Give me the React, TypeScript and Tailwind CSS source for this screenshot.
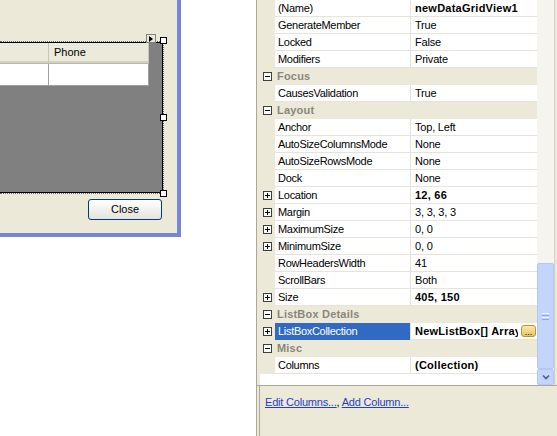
import React from 'react'

type Row =
  | { cat: string }
  | { n: string; v: string; b?: boolean; plus?: boolean; sel?: boolean; btn?: boolean }

const ROWS: Row[] = [
  { n: '(Name)', v: 'newDataGridView1', b: true },
  { n: 'GenerateMember', v: 'True' },
  { n: 'Locked', v: 'False' },
  { n: 'Modifiers', v: 'Private' },
  { cat: 'Focus' },
  { n: 'CausesValidation', v: 'True' },
  { cat: 'Layout' },
  { n: 'Anchor', v: 'Top, Left' },
  { n: 'AutoSizeColumnsMode', v: 'None' },
  { n: 'AutoSizeRowsMode', v: 'None' },
  { n: 'Dock', v: 'None' },
  { n: 'Location', v: '12, 66', b: true, plus: true },
  { n: 'Margin', v: '3, 3, 3, 3', plus: true },
  { n: 'MaximumSize', v: '0, 0', plus: true },
  { n: 'MinimumSize', v: '0, 0', plus: true },
  { n: 'RowHeadersWidth', v: '41' },
  { n: 'ScrollBars', v: 'Both' },
  { n: 'Size', v: '405, 150', b: true, plus: true },
  { cat: 'ListBox Details' },
  { n: 'ListBoxCollection', v: 'NewListBox[] Array', b: true, plus: true, sel: true, btn: true },
  { cat: 'Misc' },
  { n: 'Columns', v: '(Collection)', b: true },
]

function ExpandBox({ open }: { open: boolean }) {
  return (
    <svg width="9" height="9" viewBox="0 0 9 9" className="block">
      <rect x="0.5" y="0.5" width="8" height="8" fill="#fff" stroke="#3f3f3f" />
      <line x1="2" y1="4.5" x2="7" y2="4.5" stroke="#000" />
      {!open && <line x1="4.5" y1="2" x2="4.5" y2="7" stroke="#000" />}
    </svg>
  )
}

function PropRow({ row }: { row: Row }) {
  if ('cat' in row) {
    return (
      <div className="flex h-[17px] items-center bg-[#ECE9D8]">
        <div className="flex w-[18px] shrink-0 justify-center pl-[2px]">
          <ExpandBox open />
        </div>
        <span className="pl-[2px] font-bold tracking-[0.2px] text-[#8a877a]">{row.cat}</span>
      </div>
    )
  }
  return (
    <div className="flex h-[17px]">
      <div className="flex w-[18px] shrink-0 items-center justify-center bg-[#ECE9D8] pl-[2px]">
        {row.plus && <ExpandBox open={false} />}
      </div>
      <div
        className={
          row.sel
            ? 'flex w-[136px] shrink-0 items-center border-r border-[#E6E4DA] bg-[#316AC5] pl-[3px] text-white'
            : 'flex w-[136px] shrink-0 items-center border-r border-b border-[#E6E4DA] bg-white pl-[3px] text-black'
        }
      >
        <span className="whitespace-nowrap tracking-[-0.3px]">{row.n}</span>
      </div>
      <div className="flex min-w-0 flex-1 items-center border-b border-[#E6E4DA] bg-white pl-[4px] pr-[1px]">
        <span
          className={
            'min-w-0 flex-1 overflow-hidden whitespace-nowrap text-black ' +
            (row.b ? 'font-bold tracking-[0.25px]' : 'tracking-[-0.2px]')
          }
        >
          {row.v}
        </span>
        {row.btn && (
          <div className="ml-[3px] flex h-[12px] w-[15px] shrink-0 items-end justify-center rounded-[3px] border border-[#b8953c] bg-linear-to-b from-[#fbe7a6] to-[#e9c35f] text-[9px] leading-[8px] text-black">
            ...
          </div>
        )}
      </div>
    </div>
  )
}

function ScrollBar() {
  return (
    <div className="flex w-[17px] shrink-0 flex-col bg-[#F5F4EF]">
      <div className="h-[263px]" />
      <div className="flex h-[106px] items-center justify-center rounded-[2px] border border-[#b4c8f6] bg-[#c3d5fd]">
        <div className="flex flex-col gap-[1px]">
          <div className="h-px w-[7px] bg-[#eef4fe]" />
          <div className="h-px w-[7px] bg-[#8ca6e4]" />
          <div className="h-px w-[7px] bg-[#eef4fe]" />
          <div className="h-px w-[7px] bg-[#8ca6e4]" />
        </div>
      </div>
      <div className="flex h-[16px] items-center justify-center rounded-[2px] border border-[#b4c8f6] bg-[#c3d5fd]">
        <svg width="8" height="6" viewBox="0 0 8 6">
          <path d="M1 1.5 L4 4.5 L7 1.5" fill="none" stroke="#4d6185" strokeWidth="1.6" />
        </svg>
      </div>
    </div>
  )
}

function Handle({ className }: { className: string }) {
  return <div className={'absolute h-[7px] w-[7px] border border-black bg-white ' + className} />
}

export default function App() {
  return (
    <div className="flex h-[436px] w-[557px] overflow-hidden bg-white font-['Liberation_Sans',Arial,sans-serif] text-[11px] leading-none text-black">
      {/* designer surface */}
      <div className="w-[256px] shrink-0">
        <div className="flex h-[237px] w-[181px] flex-col border-r-4 border-b-4 border-[#7387d3] bg-[#ECE9D8] pt-[41px]">
          <div className="relative h-[153px] w-[164px] border-t border-r border-b border-dotted border-[#6b6b6b]">
            <div className="flex h-full flex-col border-t border-r border-b border-black bg-[#808080]">
              <div className="flex h-[20px] w-[149px] bg-[#EBEADB] shadow-[inset_0_-2px_0_#d6d2c2]">
                <div className="w-[49px] border-r border-[#c9c6b4]" />
                <div className="flex w-[100px] items-center border-r border-[#c9c6b4] pl-[5px] pb-[2px]">Phone</div>
              </div>
              <div className="flex h-[23px] w-[149px] border-t border-[#b9b7ab] border-b border-b-[#a0a0a0] bg-white">
                <div className="w-[49px] border-r border-[#a0a0a0]" />
                <div className="w-[100px] border-r border-[#a0a0a0]" />
              </div>
            </div>
            <Handle className="top-[-5px] right-[-4px]" />
            <Handle className="top-[72px] right-[-4px]" />
            <Handle className="top-[148px] right-[-4px]" />
            <div className="absolute top-[-8px] left-[146px] flex h-[9px] w-[10px] items-center justify-center border border-[#808080] bg-[#ECE9D8]">
              <svg width="4" height="6" viewBox="0 0 4 6">
                <path d="M0 0 L4 3 L0 6 Z" fill="#000" />
              </svg>
            </div>
          </div>
          <button className="mt-[5px] ml-[88px] flex h-[21px] w-[74px] items-center justify-center rounded-[3px] border border-[#003c74] bg-linear-to-b from-white to-[#e4e3dc] pb-[1px] text-[11px] text-black">
            Close
          </button>
        </div>
      </div>

      {/* properties panel */}
      <div className="flex w-[301px] shrink-0 flex-col border-l border-[#aca899] bg-[#ECE9D8]">
        <div className="flex h-[386px] border-b border-[#aca899]">
          <div className="flex w-[280px] shrink-0 flex-col">
            {ROWS.map((r, i) => (
              <PropRow key={i} row={r} />
            ))}
            <div className="ml-[3px] flex-1 bg-white" />
          </div>
          <ScrollBar />
          <div className="w-[3px] border-l border-[#d4d0c8]" />
        </div>
        <div className="ml-[2px] flex-1 border-l border-[#aca899] pt-[11px] pl-[5px] tracking-[-0.2px]">
          <span className="text-[#1f3fd0] underline">Edit Columns...</span>
          <span>, </span>
          <span className="text-[#1f3fd0] underline">Add Column...</span>
        </div>
      </div>
    </div>
  )
}
